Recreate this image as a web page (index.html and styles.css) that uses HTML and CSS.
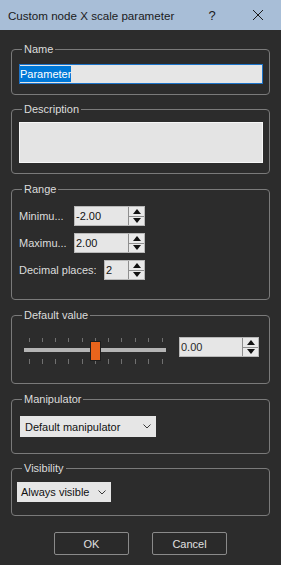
FILE: index.html
```html
<!DOCTYPE html>
<html lang="en">
<head>
    <meta charset="UTF-8">
    <meta name="viewport" content="width=device-width, initial-scale=1.0">
    <title>Custom node X scale parameter</title>
    <link rel="stylesheet" href="styles.css">
</head>
<body>
    <div class="dialog">
        <div class="titlebar">
            <span class="title">Custom node X scale parameter</span>
            <span class="title-button help">?</span>
            <span class="title-button close">
                <svg width="10" height="10" viewBox="0 0 10 10">
                    <path d="M0 0 L10 10 M10 0 L0 10" stroke="#1b1b1b" stroke-width="1"/>
                </svg>
            </span>
        </div>

        <div class="content">
            <fieldset class="group group-name">
                <legend>Name</legend>
                <div class="text-field focused"><span class="selected">Parameter</span></div>
            </fieldset>

            <fieldset class="group group-description">
                <legend>Description</legend>
                <div class="text-area"></div>
            </fieldset>

            <fieldset class="group group-range">
                <legend>Range</legend>
                <div class="form-row">
                    <label>Minimu...</label>
                    <div class="spinbox spinbox-range">
                        <span class="spin-value">-2.00</span>
                        <span class="spin-buttons"><span class="spin-btn"><i class="arrow-up"></i></span><span class="spin-btn"><i class="arrow-down"></i></span></span>
                    </div>
                </div>
                <div class="form-row">
                    <label>Maximu...</label>
                    <div class="spinbox spinbox-range">
                        <span class="spin-value">2.00</span>
                        <span class="spin-buttons"><span class="spin-btn"><i class="arrow-up"></i></span><span class="spin-btn"><i class="arrow-down"></i></span></span>
                    </div>
                </div>
                <div class="form-row form-row-wide">
                    <label>Decimal places:</label>
                    <div class="spinbox spinbox-small">
                        <span class="spin-value">2</span>
                        <span class="spin-buttons"><span class="spin-btn"><i class="arrow-up"></i></span><span class="spin-btn"><i class="arrow-down"></i></span></span>
                    </div>
                </div>
            </fieldset>

            <fieldset class="group group-default">
                <legend>Default value</legend>
                <div class="slider-row">
                    <svg class="slider" width="150" height="32" viewBox="0 0 150 32">
                        <g stroke="#707070" stroke-width="1">
                            <path d="M7.5 3 V7 M20.5 3 V7 M33.5 3 V7 M46.5 3 V7 M60.5 3 V7 M73.5 3 V7 M86.5 3 V7 M99.5 3 V7 M113.5 3 V7 M126.5 3 V7 M140.5 3 V7"/>
                            <path d="M7.5 24 V29 M20.5 24 V29 M33.5 24 V29 M46.5 24 V29 M60.5 24 V29 M73.5 24 V29 M86.5 24 V29 M99.5 24 V29 M113.5 24 V29 M126.5 24 V29 M140.5 24 V29"/>
                        </g>
                        <rect x="2" y="13" width="142" height="4" fill="#b5b5b5"/>
                        <rect x="68.5" y="6.5" width="10" height="19" fill="#e8641c" stroke="#1e1e1e" stroke-width="1"/>
                    </svg>
                    <div class="spinbox spinbox-value">
                        <span class="spin-value">0.00</span>
                        <span class="spin-buttons"><span class="spin-btn"><i class="arrow-up"></i></span><span class="spin-btn"><i class="arrow-down"></i></span></span>
                    </div>
                </div>
            </fieldset>

            <fieldset class="group group-manipulator">
                <legend>Manipulator</legend>
                <div class="combo combo-manipulator">
                    <span>Default manipulator</span>
                    <svg width="8" height="5" viewBox="0 0 8 5"><path d="M0.5 0.5 L4 4 L7.5 0.5" fill="none" stroke="#3a3a3a" stroke-width="1"/></svg>
                </div>
            </fieldset>

            <fieldset class="group group-visibility">
                <legend>Visibility</legend>
                <div class="combo combo-visibility">
                    <span>Always visible</span>
                    <svg width="8" height="5" viewBox="0 0 8 5"><path d="M0.5 0.5 L4 4 L7.5 0.5" fill="none" stroke="#3a3a3a" stroke-width="1"/></svg>
                </div>
            </fieldset>

            <div class="dialog-buttons">
                <button class="button">OK</button>
                <button class="button">Cancel</button>
            </div>
        </div>
    </div>
</body>
</html>
```

FILE: styles.css
```css
body {
    margin: 0;
    background: #2c2c2c;
    font-family: 'Liberation Sans', Arial, sans-serif;
    font-size: 11px;
    color: #dcdcdc;
}

.dialog {
    width: 281px;
    height: 565px;
    display: flex;
    flex-direction: column;
}

.titlebar {
    height: 30px;
    flex-shrink: 0;
    display: flex;
    align-items: center;
    padding-left: 8px;
    background: #a8bed7;
    color: #1b1b1b;
    font-size: 11.6px;
}

.title {
    flex: 1;
}

.title-button {
    width: 46px;
    height: 30px;
    display: flex;
    align-items: center;
    justify-content: center;
}

.help {
    font-size: 13px;
}

.content {
    padding-top: 12px;
}

/* group boxes */
.group {
    margin: 8px 11px 0;
    padding: 0 6px 10px 7px;
    border: 1px solid #7a7a7a;
    border-radius: 4px;
    min-width: 0;
}

.group legend {
    margin-left: 3px;
    padding: 0 2px;
    line-height: 15px;
    color: #dcdcdc;
}

.group-name {
    margin-top: 0;
    padding-top: 7px;
    padding-bottom: 10px;
}

.group-description {
    margin-top: 7px;
    padding-top: 5px;
    padding-bottom: 10px;
}

.group-range {
    padding-top: 9px;
    padding-bottom: 19px;
}

.group-default {
    padding-top: 12px;
    padding-bottom: 16px;
}

.group-manipulator {
    padding-top: 9px;
    padding-bottom: 16px;
}

.group-visibility {
    margin-top: 7px;
    padding-top: 6px;
    padding-bottom: 13px;
}

/* text inputs */
.text-field {
    height: 20px;
    box-sizing: border-box;
    display: flex;
    align-items: center;
    border: 1px solid #1d74c9;
    background: #e6e6e6;
    color: #111;
}

.text-field .selected {
    line-height: 16px;
    background: #0078d7;
    color: #fff;
}

.text-area {
    height: 41px;
    box-sizing: border-box;
    border: 1px solid #f6f6f6;
    background: #e4e4e4;
}

/* range rows */
.form-row {
    display: flex;
    align-items: center;
    height: 20px;
}

.form-row + .form-row {
    margin-top: 7px;
}

.form-row label {
    width: 55px;
}

.form-row-wide label {
    width: 85px;
}

.spinbox {
    height: 20px;
    box-sizing: border-box;
    display: flex;
    border: 1px solid #b8b8b8;
    background: #e6e6e6;
    color: #111;
}

.spinbox-range {
    width: 71px;
}

.spinbox-small {
    width: 41px;
}

.spinbox-value {
    width: 80px;
    margin-left: 7px;
    margin-top: 2px;
    color: #2a2a2a;
}

.spin-value {
    flex: 1;
    padding-left: 1px;
    line-height: 18px;
}

.spin-buttons {
    width: 15px;
    display: flex;
    flex-direction: column;
    border-left: 1px solid #8e8e8e;
}

.spin-btn {
    flex: 1;
    display: flex;
    align-items: center;
    justify-content: center;
    background: #e9e9e9;
}

.spin-btn + .spin-btn {
    border-top: 1px solid #8e8e8e;
}

.arrow-up,
.arrow-down {
    width: 0;
    height: 0;
    border-left: 4.5px solid transparent;
    border-right: 4.5px solid transparent;
}

.arrow-up {
    border-bottom: 5px solid #111;
}

.arrow-down {
    border-top: 5px solid #111;
}

/* slider */
.slider-row {
    display: flex;
    align-items: flex-start;
}

.slider {
    display: block;
    margin-left: 3px;
}

/* combo boxes */
.combo {
    height: 21px;
    box-sizing: border-box;
    display: flex;
    align-items: center;
    justify-content: space-between;
    background: #e6e6e6;
    color: #111;
}

.combo-manipulator {
    width: 136px;
    margin-left: 1px;
    padding: 0 5px 0 5px;
}

.combo-visibility {
    width: 94px;
    height: 20px;
    margin-left: -2px;
    padding: 0 5px 0 4px;
}

/* OK / Cancel */
.dialog-buttons {
    display: flex;
    justify-content: center;
    gap: 23px;
    margin-top: 16px;
}

.button {
    width: 75px;
    height: 23px;
    box-sizing: border-box;
    border: 1px solid #8a8a8a;
    border-radius: 2px;
    background: #2a2a2a;
    color: #e0e0e0;
    font-family: inherit;
    font-size: 11px;
    padding: 0;
}
```
